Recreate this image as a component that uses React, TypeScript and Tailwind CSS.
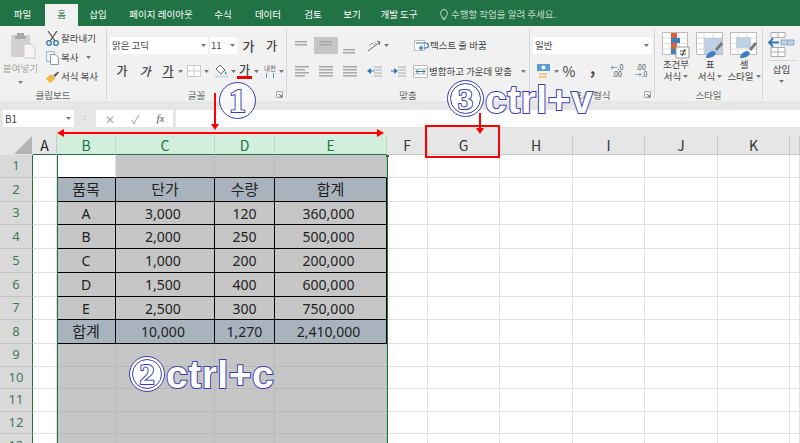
import React from "react";

const tabs = [
  { label: "파일", w: "w-[45px]" },
  { label: "홈", w: "w-[33px]", active: true },
  { label: "삽입", w: "w-[40px]" },
  { label: "페이지 레이아웃", w: "w-[86px]" },
  { label: "수식", w: "w-[38px]" },
  { label: "데이터", w: "w-[52px]" },
  { label: "검토", w: "w-[38px]" },
  { label: "보기", w: "w-[40px]" },
  { label: "개발 도구", w: "w-[54px]" },
];

const columns = [
  { name: "A", w: "w-[24px]" },
  { name: "B", w: "w-[59px]", selected: true },
  { name: "C", w: "w-[99px]", selected: true },
  { name: "D", w: "w-[60px]", selected: true },
  { name: "E", w: "w-[112px]", selected: true },
  { name: "F", w: "w-[41px]" },
  { name: "G", w: "w-[72px]" },
  { name: "H", w: "w-[73px]" },
  { name: "I", w: "w-[72px]" },
  { name: "J", w: "w-[73px]" },
  { name: "K", w: "w-[72px]" },
  { name: "", w: "w-[10px]" },
];

const rowHeights = [
  "h-[23px]", "h-[24px]", "h-[23px]", "h-[24px]", "h-[24px]", "h-[24px]", "h-[23px]",
  "h-[24px]", "h-[23px]", "h-[22px]", "h-[23px]", "h-[22px]", "h-[24px]",
];

const table: Record<number, string[]> = {
  1: ["품목", "단가", "수량", "합계"],
  2: ["A", "3,000", "120", "360,000"],
  3: ["B", "2,000", "250", "500,000"],
  4: ["C", "1,000", "200", "200,000"],
  5: ["D", "1,500", "400", "600,000"],
  6: ["E", "2,500", "300", "750,000"],
  7: ["합계", "10,000", "1,270", "2,410,000"],
};

function Caret({ className = "" }: { className?: string }) {
  return (
    <svg width="5" height="3" viewBox="0 0 5 3" className={`shrink-0 ${className}`}>
      <path d="M0 0h5L2.500 3z" fill="#777" />
    </svg>
  );
}

function Launcher() {
  return (
    <svg width="7" height="7" viewBox="0 0 7 7" className="absolute right-[3px] top-[2px]">
      <path d="M.5 .5h6v6h-6z" fill="none" stroke="#aaa" />
      <path d="M3 3l3 3M6 3.500V6H3.500" fill="none" stroke="#777" />
    </svg>
  );
}

function Group({
  label,
  width,
  launcher,
  children,
}: {
  label: string;
  width: string;
  launcher?: boolean;
  children: React.ReactNode;
}) {
  return (
    <div className={`flex h-[70px] shrink-0 flex-col border-r border-[#d6d6d6] ${width}`}>
      <div className="h-[60px]">{children}</div>
      <div className="relative h-[10px] pt-[1px] text-center text-[9.500px] leading-[10px] text-[#666]">
        {label}
        {launcher && <Launcher />}
      </div>
    </div>
  );
}

function Lines({ wide = [14, 10, 14, 10] }: { wide?: number[] }) {
  return (
    <svg width="16" height="12" viewBox="0 0 16 12">
      {wide.map((w, i) => (
        <rect key={i} x="1" y={1 + i * 3} width={w} height="1.500" fill="#a8a8a8" />
      ))}
    </svg>
  );
}

function PasteIcon() {
  return (
    <svg width="25" height="27" viewBox="0 0 25 27" className="ml-[5px]">
      <path d="M0 3h19v22H0z" fill="#d2d0d0" />
      <path d="M6 1h7v3h2v3H4V4h2z" fill="#a9a7a7" />
      <path d="M13 12h7l4 4v10H13z" fill="#f5f5f5" stroke="#c8c8c8" />
    </svg>
  );
}

function ScissorsIcon() {
  return (
    <svg width="13" height="15" viewBox="0 0 13 15">
      <path d="M2 0l7 10M11 0L4 10" stroke="#555" strokeWidth="1.300" fill="none" />
      <circle cx="3" cy="12" r="2.300" fill="none" stroke="#2e75b6" strokeWidth="1.300" />
      <circle cx="10" cy="12" r="2.300" fill="none" stroke="#2e75b6" strokeWidth="1.300" />
    </svg>
  );
}

function CopyIcon() {
  return (
    <svg width="13" height="15" viewBox="0 0 13 15">
      <path d="M.5 1.500h8v10h-8z" fill="#eef3f8" stroke="#9db6cf" />
      <path d="M4.500 4.500h4.500l3.500 3v7h-8z" fill="#fff" stroke="#8a9cae" />
    </svg>
  );
}

function BrushIcon() {
  return (
    <svg width="13" height="12" viewBox="0 0 14 12">
      <path d="M0 7l6-4 4 4-4 5H3z" fill="#f0b84e" />
      <path d="M8 4l5-4 1 1-4 5z" fill="#555" />
    </svg>
  );
}

function GlyphGa({ className = "" }: { className?: string }) {
  return <span className={`text-[12px] font-medium leading-none text-[#444] ${className}`}>가</span>;
}

function TableStyleIcon({ cell }: { cell?: boolean }) {
  return (
    <svg width="28" height="27" viewBox="0 0 28 27">
      <path d="M.5 .5h26v22H.5z" fill="#fff" stroke="#bbb" />
      <path d={cell ? "M6 5h15v11H6z" : "M8 6h18v16H8z"} fill="#bcd0e6" />
      <path d="M.5 6h26M.5 11.500h26M.5 17h26M8 .5v22M17 .5v22" stroke="#cfcfcf" fill="none" strokeWidth=".7" />
      <path d="M19 17l6-7 2 2-6 7z" fill="#777" />
      <path d="M10 26c0-4 4-7 8-7l2 2c-1 3-4 5-10 5z" fill="#3f7fc0" />
    </svg>
  );
}

function CondIcon() {
  return (
    <svg width="28" height="27" viewBox="0 0 28 27">
      <path d="M.5 .5h25v22H.5z" fill="#fff" stroke="#bbb" />
      <path d="M9 .5v22M17 .5v22M.5 6h25M.5 11.500h25M.5 17h25" stroke="#cfcfcf" strokeWidth=".7" fill="none" />
      <path d="M9 1h6v5H9z" fill="#d9653b" />
      <path d="M9 6h9v5H9z" fill="#3f7fc0" />
      <path d="M9 11h6v6H9z" fill="#d9653b" />
      <path d="M9 17h5v5H9z" fill="#3f7fc0" />
      <path d="M14 15h13v11H14z" fill="#fff" stroke="#999" />
      <path d="M18 19h6M18 22h6M20 24l3-7" stroke="#444" fill="none" />
    </svg>
  );
}

function InsertIcon() {
  return (
    <svg width="27" height="25" viewBox="0 0 27 25">
      <path d="M3 .5h14v5H3zM3 15.500h14v9H3zM10 .5v5M10 15.500v9M3 20h14" fill="#fff" stroke="#aaa" />
      <path d="M13 8h13v5H13zM19.500 8v5" fill="#bcd0e6" stroke="#8fa9c4" />
      <path d="M1 10.500h10M5 6.500l-4 4 4 4" stroke="#2e75b6" strokeWidth="1.800" fill="none" />
    </svg>
  );
}

function RibbonTop() {
  return (
    <div className="flex h-[26px] items-end bg-[#217346] text-[9.500px] text-white">
      {tabs.map((t) => (
        <div
          key={t.label}
          className={`flex h-[22px] shrink-0 items-center justify-center pb-[2px] ${t.w} ${
            t.active ? "bg-[#f1f1f1] text-[#217346]" : ""
          }`}
        >
          {t.label}
        </div>
      ))}
      <div className="ml-[14px] flex h-[22px] items-center gap-[3px] pb-[2px] text-[#c5dccf]">
        <svg width="8" height="11" viewBox="0 0 8 11">
          <path d="M2 7.500C-.5 5 .8 .5 4 .5S8.500 5 6 7.500V9H2zM3 10.500h2" fill="none" stroke="#d5e6dc" strokeWidth=".9" />
        </svg>
        <span className="whitespace-nowrap">수행할 작업을 알려 주세요.</span>
      </div>
    </div>
  );
}

function Ribbon() {
  return (
    <div className="flex h-[75px] bg-[#f1f1f1] pt-[3px] text-[9.500px] text-[#444]">
      <Group label="클립보드" width="w-[107px]">
        <div className="flex">
          <div className="flex w-[41px] flex-col items-center pt-[3px]">
            <PasteIcon />
            <span className="mt-[2px] text-[#a5a5a5]">붙여넣기</span>
            <Caret className="mt-[6px]" />
          </div>
          <div className="ml-[5px] flex flex-col">
            <div className="flex h-[19px] items-center gap-[2px]"><ScissorsIcon /> 잘라내기</div>
            <div className="flex h-[19px] items-center gap-[2px]"><CopyIcon /> 복사 <Caret className="ml-[6px]" /></div>
            <div className="flex h-[19px] items-center gap-[2px]"><BrushIcon /> 서식 복사</div>
          </div>
        </div>
      </Group>

      <Group label="글꼴" width="w-[180px]" launcher>
        <div className="flex flex-col pl-[3px] pt-[8px]">
          <div className="flex h-[17px] items-center">
            <div className="flex h-[17px] w-[98px] items-center justify-between bg-white px-[2px]">맑은 고딕<Caret /></div>
            <div className="ml-[2px] flex h-[17px] w-[27px] items-center justify-between bg-white px-[1px]">11<Caret className="mr-[1px]" /></div>
            <GlyphGa className="w-[23px] text-center text-[13px]" />
            <GlyphGa className="w-[23px] text-center" />
          </div>
          <div className="mt-[8px] flex h-[18px] items-center">
            <GlyphGa className="w-[24px] text-center" />
            <GlyphGa className="w-[22px] text-center italic" />
            <GlyphGa className="ml-[2px] w-[20px] text-center underline" />
            <Caret />
            <svg width="14" height="12" viewBox="0 0 14 12" className="ml-[4px]">
              <path d="M.5 .5h13v11H.5zM7 .5v11M.5 6h13" fill="#fff" stroke="#c9c9c9" />
            </svg>
            <Caret className="ml-[3px]" />
            <svg width="13" height="14" viewBox="0 0 13 14" className="ml-[6px]">
              <path d="M5 1l5 5-4 4-5-5z" fill="#fff" stroke="#666" />
              <path d="M10 7l2 3-2 0z" fill="#3f7fc0" />
              <path d="M0 11h13v3H0z" fill="#cfe0f1" />
            </svg>
            <Caret className="ml-[3px]" />
            <div className="ml-[1px] flex w-[15px] flex-col items-center">
              <GlyphGa />
              <div className="h-[3px] w-[15px] bg-[#e60000]" />
            </div>
            <Caret className="ml-[2px]" />
            <div className="ml-[5px] flex w-[12px] flex-col items-center text-[6.500px] leading-[7px] text-[#666]">
              <span className="whitespace-nowrap">내천</span>
              <div className="mt-[1px] h-[5px] w-[8px] border-x border-[#5b9bd5]" />
            </div>
            <Caret className="ml-[3px]" />
          </div>
        </div>
      </Group>

      <Group label="맞춤" width="w-[243px]">
        <div className="flex flex-col pl-[3px] pt-[8px]">
          <div className="flex h-[17px] items-center">
            <div className="flex w-[24px] items-start justify-center self-start pt-[3px]"><Lines wide={[12, 12]} /></div>
            <div className="flex h-[17px] w-[24px] items-center justify-center bg-[#c6c6c6]"><Lines wide={[13, 13]} /></div>
            <div className="flex w-[24px] items-end justify-center self-end"><Lines wide={[0, 0, 12, 12]} /></div>
            <div className="ml-[5px] flex w-[20px] items-center">
              <svg width="16" height="14" viewBox="0 0 16 14" className="shrink-0">
                <path d="M1 12L13 3M10 2l3 1-1 3" stroke="#666" fill="none" />
                <path d="M2 7l3-3 2 2M7 3l2 2" stroke="#999" fill="none" />
              </svg>
              <Caret className="ml-[1px]" />
            </div>
            <div className="ml-[27px] flex items-center gap-[1px] whitespace-nowrap">
              <svg width="15" height="13" viewBox="0 0 15 13">
                <path d="M.5 1.500h10v10H.5z" fill="#fff" stroke="#bbb" />
                <path d="M2 4h10a2 2 0 010 5H6M8 7L5.500 9 8 11" stroke="#2e75b6" fill="none" strokeWidth="1.200" />
              </svg>
              텍스트 줄 바꿈
            </div>
          </div>
          <div className="mt-[8px] flex h-[18px] items-center">
            <div className="flex w-[24px] justify-center"><Lines /></div>
            <div className="flex w-[24px] justify-center"><Lines wide={[14, 14, 14, 14]} /></div>
            <div className="flex w-[24px] justify-center"><Lines wide={[14, 14, 14, 14]} /></div>
            <div className="flex w-[24px] justify-center"><svg width="15" height="12" viewBox="0 0 15 12"><path d="M7 2h8M7 5h8M7 8h8M7 11h8" stroke="#aaa" /><path d="M0 6l4-3v6z" fill="#2e75b6" /><path d="M3 6h4" stroke="#2e75b6" /></svg></div>
            <div className="flex w-[24px] justify-center"><svg width="15" height="12" viewBox="0 0 15 12"><path d="M7 2h8M7 5h8M7 8h8M7 11h8" stroke="#aaa" /><path d="M7 6L3 3v6z" fill="#2e75b6" /><path d="M0 6h4" stroke="#2e75b6" /></svg></div>
            <div className="ml-[3px] flex items-center gap-[1px] whitespace-nowrap">
              <svg width="15" height="13" viewBox="0 0 15 13">
                <path d="M.5 .5h14v12H.5zM.5 4h14M.5 9h14" fill="#fff" stroke="#bbb" />
                <path d="M3 6.500h9M5 4.500l-2 2 2 2M10 4.500l2 2-2 2" stroke="#2e75b6" fill="none" />
              </svg>
              병합하고 가운데 맞춤
              <Caret className="ml-[8px]" />
            </div>
          </div>
        </div>
      </Group>

      <Group label="표시 형식" width="w-[125px]" launcher>
        <div className="flex flex-col pl-[3px] pt-[8px]">
          <div className="flex h-[17px] w-[119px] items-center justify-between bg-white px-[2px]">일반<Caret className="mr-[1px]" /></div>
          <div className="mt-[8px] flex h-[18px] items-center pl-[4px]">
            <svg width="14" height="16" viewBox="0 0 14 16" className="shrink-0">
              <path d="M0 1h13v7H0z" fill="#5b9bd5" />
              <circle cx="6.500" cy="4.500" r="2" fill="#fff" />
              <path d="M2 10h8v2H2zM2 13h8v2H2z" fill="#f0c68c" />
            </svg>
            <Caret className="ml-[3px]" />
            <span className="w-[20px] text-center text-[14px] leading-none">%</span>
            <span className="mb-[8px] ml-[6px] w-[15px] text-center text-[16px] font-bold leading-none">,</span>
            <div className="ml-[6px] w-[22px] text-center text-[7px] leading-[7px]"><span className="text-[#2e75b6]">←</span>.0<br />.00</div>
            <div className="ml-[2px] w-[22px] text-center text-[7px] leading-[7px]">.00<br /><span className="text-[#2e75b6]">→</span>.0</div>
          </div>
        </div>
      </Group>

      <Group label="스타일" width="w-[108px]">
        <div className="flex pl-[4px] pt-[3px] text-center leading-[12px]">
          <div className="flex w-[34px] flex-col items-center">
            <CondIcon />
            <span className="-mt-[1px]">조건부</span>
            <span className="flex items-center gap-[2px]">서식 <Caret /></span>
          </div>
          <div className="flex w-[34px] flex-col items-center">
            <TableStyleIcon />
            <span className="-mt-[1px]">표</span>
            <span className="flex items-center gap-[2px]">서식 <Caret /></span>
          </div>
          <div className="flex w-[34px] flex-col items-center">
            <TableStyleIcon cell />
            <span className="-mt-[1px]">셀</span>
            <span className="flex items-center gap-[2px] whitespace-nowrap">스타일 <Caret /></span>
          </div>
        </div>
      </Group>

      <div className="flex w-[37px] flex-col items-center pt-[3px]">
        <InsertIcon />
        <div className="mt-[3px] w-[30px] border-t border-[#d6d6d6]" />
        <span className="mt-[1px] leading-[14px]">삽입</span>
        <Caret className="mt-[4px]" />
      </div>
    </div>
  );
}

function FormulaBar() {
  return (
    <div className="flex h-[26px] flex-col bg-[#e6e6e6] pt-[9px] text-[#444]">
      <div className="flex h-[17px] items-stretch">
        <div className="ml-[3px] flex w-[71px] items-center justify-between bg-white pl-[2px] pr-[3px] text-[10px]">
          B1
          <Caret />
        </div>
        <div className="flex w-[22px] items-center justify-center text-[10px] text-[#bbb]">⋮</div>
        <div className="flex w-[77px] items-center bg-white text-[#aaa]">
          <span className="w-[27px] text-center text-[12px] leading-none">✕</span>
          <span className="w-[25px] text-center text-[12px] leading-none">✓</span>
          <span className="w-[25px] text-center font-['Liberation_Serif',serif] text-[11px] italic text-[#555]">fx</span>
        </div>
        <div className="ml-[3px] flex-1 bg-white" />
      </div>
    </div>
  );
}

function ColumnHeader() {
  return (
    <div className="flex h-[28px] flex-col bg-[#e6e6e6]">
      <div className="h-[8px]" />
      <div className="flex h-[20px] text-[14px] leading-none text-[#333]">
        <div className="flex w-[33px] shrink-0 items-end justify-end pb-[1px] pr-[1px]">
          <svg width="18" height="18" viewBox="0 0 18 18"><path d="M18 0v18H0z" fill="#b5b5b5" /></svg>
        </div>
        {columns.map((c) => (
          <div
            key={c.name || "rest"}
            className={`flex shrink-0 items-center justify-center border-b border-r ${c.w} ${
              c.selected
                ? "border-r-[#bcdcc9] border-b-[#217346] bg-[#d2eedd] text-[#217346]"
                : c.name === "A"
                  ? "border-r-[#c9c9c9] border-b-[#217346] text-[#222]"
                  : "border-[#c9c9c9] text-[#333]"
            }`}
          >
            {c.name}
          </div>
        ))}
      </div>
    </div>
  );
}

function Sheet() {
  return (
    <div className="relative h-[288px] overflow-hidden bg-white font-['Noto_Sans','Noto_Sans_CJK_KR',sans-serif] text-[14px] text-[#222]">
      {rowHeights.map((h, r) => (
        <div key={r} className={`flex ${h}`}>
          <div className="flex w-[33px] shrink-0 items-center justify-center border-b border-r border-b-[#c4c4c4] border-r-[#217346] bg-[#d9d9d9] text-[13px] text-[#3f7a59]">
            {r + 1}
          </div>
          {columns.map((c, i) => {
            const inTable = table[r] !== undefined && c.selected;
            const header = (r === 1 || r === 7) && c.selected;
            const value = inTable ? table[r][i - 1] : "";
            const korean = value === "품목" || value === "단가" || value === "수량" || value === "합계";
            // numbers in C and E sit a little left of centre in the reference
            const nudge = !korean && (c.name === "C" || c.name === "E") ? "pr-[4px]" : "";
            let style = "border-[#e0e0e0]";
            if (c.selected) style = "bg-[#c6c6c6] border-[#b9b9b9]";
            if (r === 0 && c.name === "B") style = "bg-white border-[#e0e0e0]";
            if (inTable) style = "bg-[#c6c6c6] border-black";
            if (header) style = "bg-[#a9b3be] border-black";
            return (
              <div
                key={c.name || "rest"}
                className={`flex shrink-0 items-center justify-center border-b border-r ${c.w} ${style} ${
                  r === 0 && c.selected ? "border-b-black" : ""
                } ${nudge} ${korean ? "text-[15px]" : ""}`}
              >
                {value}
              </div>
            );
          })}
        </div>
      ))}
      {/* selection outline */}
      <div className="pointer-events-none absolute bottom-0 left-[57px] top-0 w-[331px] border-x border-[#217346]" />
      <div className="absolute left-[386px] top-[-1px] h-[3px] w-[3px] bg-[#217346]" />
    </div>
  );
}

const outlined =
  "font-['Liberation_Sans',sans-serif] font-bold text-[39px] tracking-[0.5px] leading-none text-white [-webkit-text-stroke:2px_#3c3cb0] [paint-order:stroke_fill]";
const digit =
  "font-['Liberation_Serif',serif] font-bold leading-none text-white [-webkit-text-stroke:2px_#3c3cb0] [paint-order:stroke_fill]";

function Annotations() {
  return (
    <>
      {/* arrows */}
      <svg width="800" height="443" viewBox="0 0 800 443" className="pointer-events-none absolute left-0 top-0">
        <path d="M60 133h320" stroke="#f00" strokeWidth="2" fill="none" />
        <path d="M57 133l7-4v8zM384 133l-7-4v8z" fill="#f00" />
        <path d="M215 93v33" stroke="#f00" strokeWidth="2" fill="none" />
        <path d="M215 130l-4-6h8z" fill="#f00" />
        <path d="M480 113v16" stroke="#f00" strokeWidth="2" fill="none" />
        <path d="M480 134l-4-6h8z" fill="#f00" />
      </svg>
      <div className="pointer-events-none absolute left-[425px] top-[125px] h-[33px] w-[75px] border-[2px] border-[#f00]" />

      <div className="absolute left-[219px] top-[82px] flex h-[37px] w-[37px] items-center justify-center rounded-full border-[1.500px] border-[#3c3cb0] bg-white/60">
        <span className={`${digit} text-[34px]`}>1</span>
      </div>

      <div className="absolute left-[129px] top-[356px] flex h-[36px] w-[36px] items-center justify-center rounded-full border-[4px] border-double border-[#3c3cb0] bg-white">
        <span className={`${digit} text-[30px]`}>2</span>
      </div>
      <span className={`absolute left-[166px] top-[355px] ${outlined}`}>ctrl+c</span>

      <div className="absolute left-[447px] top-[80px] flex h-[37px] w-[37px] items-center justify-center rounded-full border-[4px] border-double border-[#3c3cb0] bg-white">
        <span className={`${digit} text-[30px]`}>3</span>
      </div>
      <span className={`absolute left-[485px] top-[80px] ${outlined}`}>ctrl+v</span>
    </>
  );
}

export default function App() {
  return (
    <div className="relative h-[443px] w-[800px] overflow-hidden bg-white font-['Noto_Sans_CJK_KR','Noto_Sans',sans-serif]">
      <RibbonTop />
      <Ribbon />
      <FormulaBar />
      <ColumnHeader />
      <Sheet />
      <Annotations />
    </div>
  );
}
